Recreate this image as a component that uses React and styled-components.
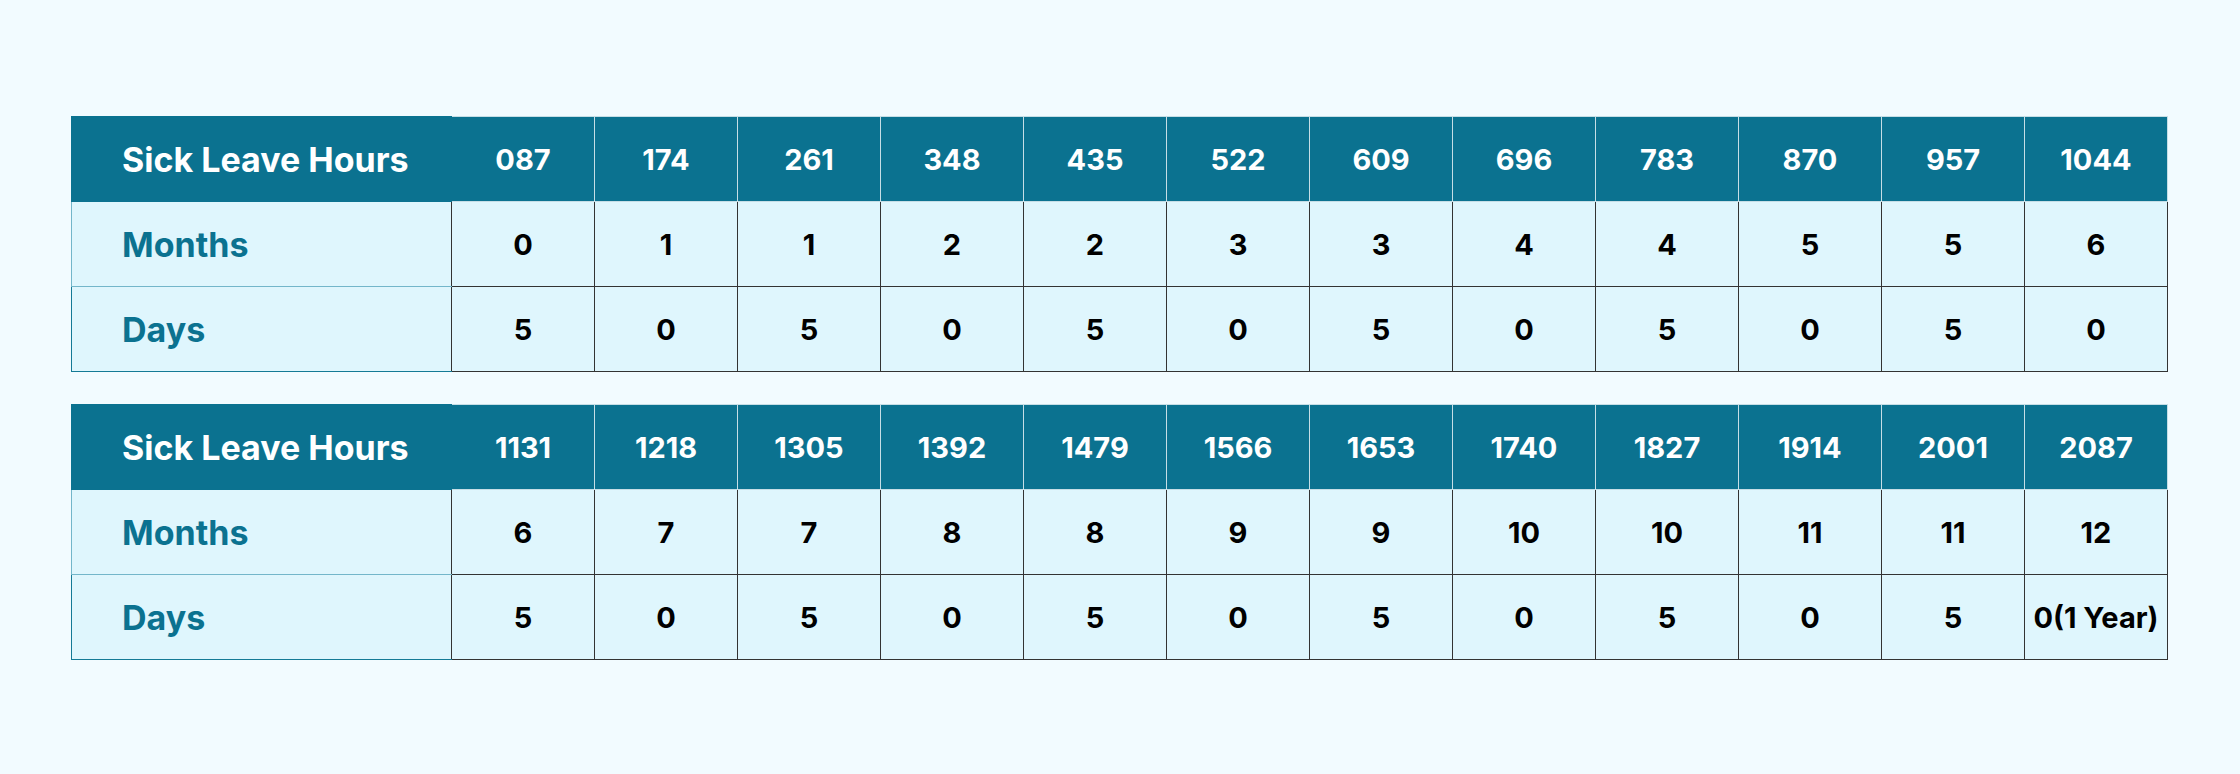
import React from 'react';
import styled, { createGlobalStyle } from 'styled-components';

const GlobalStyle = createGlobalStyle`
  html, body {
    margin: 0;
    padding: 0;
    background: #f2fbff;
    font-family: Inter, "Noto Sans", "Liberation Sans", sans-serif;
  }
`;

const Page = styled.div`
  display: flex;
  flex-direction: column;
  gap: 32px;
  padding: 116px 73px 115px 71px;
  box-sizing: border-box;
  width: 2240px;
  min-height: 774px;
`;

const Table = styled.table`
  border-collapse: collapse;
  table-layout: fixed;
  width: 2096px;
`;

const LabelCol = styled.col`
  width: 380px;
`;

const DataCol = styled.col`
  width: 143px;
`;

const HeadLabel = styled.th`
  height: 85px;
  padding: 0 0 0 50px;
  box-sizing: border-box;
  background: #0b7290;
  border: 1px solid #0b7290;
  color: #ffffff;
  font-size: 34px;
  font-weight: 700;
  text-align: left;
`;

const HeadCell = styled.th`
  background: #0b7290;
  border: 1px solid #c6dee6;
  color: #ffffff;
  font-size: 29px;
  font-weight: 700;
  text-align: center;
`;

const RowLabel = styled.td`
  height: 85px;
  padding: 0 0 0 50px;
  box-sizing: border-box;
  background: #dff6fd;
  border: 1px solid ${p => (p.$first ? '#73b6ca' : '#147a96')};
  border-right-color: #333;
  color: #0b7290;
  font-size: 34px;
  font-weight: 700;
  text-align: left;
`;

const Cell = styled.td`
  background: #dff6fd;
  border: 1px solid #333;
  color: #000;
  font-size: 29px;
  font-weight: 700;
  text-align: center;
  white-space: nowrap;
`;

const tables = [
  {
    hours: ['087', '174', '261', '348', '435', '522', '609', '696', '783', '870', '957', '1044'],
    months: ['0', '1', '1', '2', '2', '3', '3', '4', '4', '5', '5', '6'],
    days: ['5', '0', '5', '0', '5', '0', '5', '0', '5', '0', '5', '0'],
  },
  {
    hours: ['1131', '1218', '1305', '1392', '1479', '1566', '1653', '1740', '1827', '1914', '2001', '2087'],
    months: ['6', '7', '7', '8', '8', '9', '9', '10', '10', '11', '11', '12'],
    days: ['5', '0', '5', '0', '5', '0', '5', '0', '5', '0', '5', '0(1 Year)'],
  },
];

const LeaveTable = ({ hours, months, days }) => (
  <Table>
    <colgroup>
      <LabelCol />
      {hours.map((h, i) => <DataCol key={i} />)}
    </colgroup>
    <thead>
      <tr>
        <HeadLabel>Sick Leave Hours</HeadLabel>
        {hours.map((h, i) => <HeadCell key={i}>{h}</HeadCell>)}
      </tr>
    </thead>
    <tbody>
      <tr>
        <RowLabel $first>Months</RowLabel>
        {months.map((m, i) => <Cell key={i}>{m}</Cell>)}
      </tr>
      <tr>
        <RowLabel>Days</RowLabel>
        {days.map((d, i) => <Cell key={i}>{d}</Cell>)}
      </tr>
    </tbody>
  </Table>
);

export default function App() {
  return (
    <>
      <GlobalStyle />
      <Page>
        {tables.map((t, i) => <LeaveTable key={i} {...t} />)}
      </Page>
    </>
  );
}
